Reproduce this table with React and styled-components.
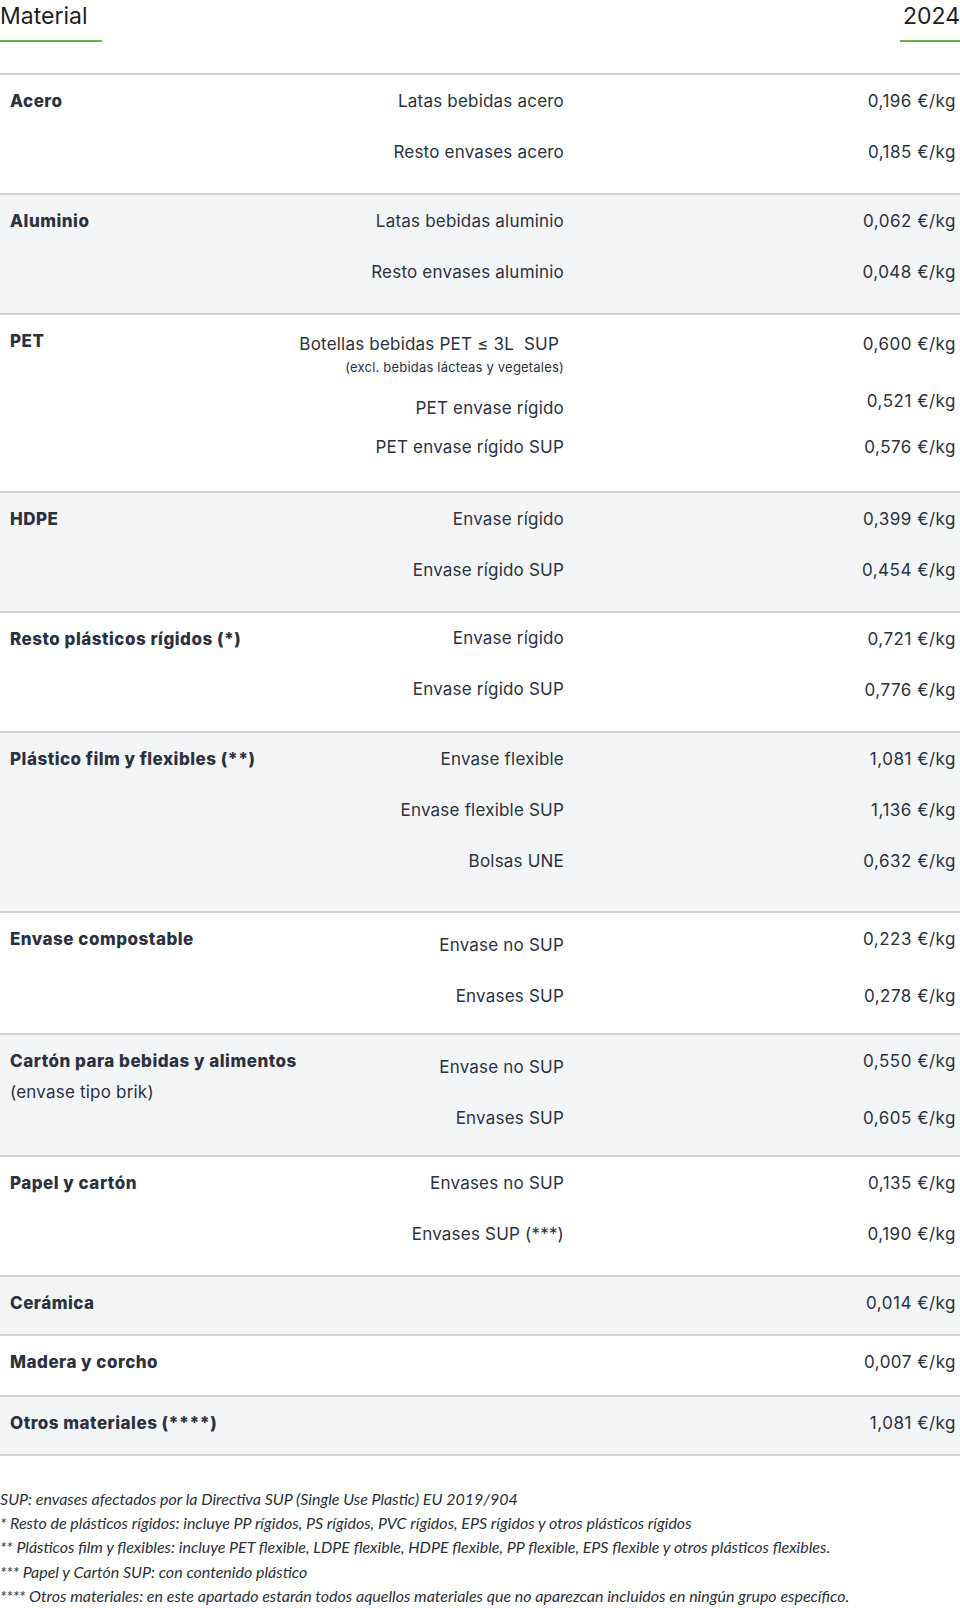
import React from "react";
import styled, { createGlobalStyle } from "styled-components";

const GlobalStyle = createGlobalStyle`
  html, body {
    margin: 0;
    padding: 0;
    background: #ffffff;
  }
  body {
    font-family: Inter, "Noto Sans", Arial, sans-serif;
    color: #2b3140;
  }
`;

const Page = styled.div`
  width: 960px;
`;

const Header = styled.div`
  display: flex;
  justify-content: space-between;
  margin-bottom: 31px;
`;

const HeadCell = styled.div`
  width: ${({ width }) => width}px;
  text-align: ${({ align }) => align || "left"};
  font-size: 23px;
  line-height: 28px;
  padding-top: 2px;
  padding-bottom: 10px;
  color: #1d1f24;
  border-bottom: 2px solid #63b545;
`;

const Table = styled.div`
  border-bottom: 2px solid #d1d2d7;
`;

const Row = styled.div`
  display: grid;
  grid-template-columns: 300px 254px 1fr;
  box-sizing: border-box;
  min-height: ${({ height }) => height}px;
  padding: 16px 4px 0 10px;
  border-top: 2px solid #d1d2d7;
  background: ${({ shaded }) => (shaded ? "#f4f5f7" : "#ffffff")};
`;

const TitleCol = styled.div`
  display: flex;
  flex-direction: column;
`;

const Title = styled.div`
  font-size: 17px;
  line-height: 20px;
  font-weight: 800;
  letter-spacing: 0.5px;
  white-space: nowrap;
`;

const SubTitle = styled.div`
  font-size: 17px;
  line-height: 20px;
  letter-spacing: 0.2px;
  margin-top: 11px;
`;

const ListCol = styled.div`
  display: flex;
  flex-direction: column;
  align-items: flex-end;
  text-align: right;
`;

const Item = styled.div`
  font-size: ${({ small }) => (small ? "13px" : "17px")};
  line-height: ${({ small }) => (small ? "16px" : "20px")};
  letter-spacing: ${({ price }) => (price ? "0.5px" : "0.2px")};
  margin-top: ${({ mt }) => mt}px;
  white-space: pre;
`;

const Notes = styled.div`
  margin-top: 31px;
  font-family: Lato, "Noto Sans", sans-serif;
  font-style: italic;
  font-size: 16px;
  line-height: 24.2px;
  color: #2b2f38;
`;

const D = [0, 31, 31];

const rows = [
  {
    title: "Acero",
    height: 120,
    items: [{ t: "Latas bebidas acero" }, { t: "Resto envases acero" }],
    prices: [{ t: "0,196 €/kg" }, { t: "0,185 €/kg" }],
  },
  {
    title: "Aluminio",
    height: 120,
    items: [{ t: "Latas bebidas aluminio" }, { t: "Resto envases aluminio" }],
    prices: [{ t: "0,062 €/kg" }, { t: "0,048 €/kg" }],
  },
  {
    title: "PET",
    height: 178,
    items: [
      { t: "Botellas bebidas PET ≤ 3L  SUP ", mt: 3 },
      { t: "(excl. bebidas lácteas y vegetales)", small: true, mt: 5 },
      { t: "PET envase rígido", mt: 23 },
      { t: "PET envase rígido SUP", mt: 19 },
    ],
    prices: [
      { t: "0,600 €/kg", mt: 3 },
      { t: "0,521 €/kg", mt: 37 },
      { t: "0,576 €/kg", mt: 26 },
    ],
  },
  {
    title: "HDPE",
    height: 120,
    items: [{ t: "Envase rígido" }, { t: "Envase rígido SUP" }],
    prices: [{ t: "0,399 €/kg" }, { t: "0,454 €/kg" }],
  },
  {
    title: "Resto plásticos rígidos (*)",
    height: 120,
    items: [{ t: "Envase rígido", mt: -1 }, { t: "Envase rígido SUP" }],
    prices: [{ t: "0,721 €/kg" }, { t: "0,776 €/kg" }],
  },
  {
    title: "Plástico film y flexibles (**)",
    height: 180,
    items: [{ t: "Envase flexible" }, { t: "Envase flexible SUP" }, { t: "Bolsas UNE" }],
    prices: [{ t: "1,081 €/kg" }, { t: "1,136 €/kg" }, { t: "0,632 €/kg" }],
  },
  {
    title: "Envase compostable",
    height: 122,
    items: [
      { t: "Envase no SUP", mt: 6 },
      { t: "Envases SUP", mt: 31 },
    ],
    prices: [
      { t: "0,223 €/kg", mt: 0 },
      { t: "0,278 €/kg", mt: 37 },
    ],
  },
  {
    title: "Cartón para bebidas y alimentos",
    sub: "(envase tipo brik)",
    height: 122,
    items: [
      { t: "Envase no SUP", mt: 6 },
      { t: "Envases SUP", mt: 31 },
    ],
    prices: [
      { t: "0,550 €/kg", mt: 0 },
      { t: "0,605 €/kg", mt: 37 },
    ],
  },
  {
    title: "Papel y cartón",
    height: 120,
    items: [{ t: "Envases no SUP" }, { t: "Envases SUP (***)" }],
    prices: [{ t: "0,135 €/kg" }, { t: "0,190 €/kg" }],
  },
  { title: "Cerámica", height: 59, items: [], prices: [{ t: "0,014 €/kg" }] },
  { title: "Madera y corcho", height: 61, items: [], prices: [{ t: "0,007 €/kg" }] },
  { title: "Otros materiales (****)", height: 59, items: [], prices: [{ t: "1,081 €/kg" }] },
];

const notes = [
  "SUP: envases afectados por la Directiva SUP (Single Use Plastic) EU 2019/904",
  "* Resto de plásticos rígidos: incluye PP rígidos, PS rígidos, PVC rígidos, EPS rígidos y otros plásticos rígidos",
  "** Plásticos film y flexibles: incluye PET flexible, LDPE flexible, HDPE flexible, PP flexible, EPS flexible y otros plásticos flexibles.",
  "*** Papel y Cartón SUP: con contenido plástico",
  "**** Otros materiales: en este apartado estarán todos aquellos materiales que no aparezcan incluidos en ningún grupo específico.",
];

function List({ entries, price }) {
  return (
    <ListCol>
      {entries.map((e, i) => (
        <Item
          key={i}
          small={e.small}
          price={price}
          mt={e.mt !== undefined ? e.mt : D[Math.min(i, 2)]}
        >
          {e.t}
        </Item>
      ))}
    </ListCol>
  );
}

export default function App() {
  return (
    <Page>
      <GlobalStyle />
      <Header>
        <HeadCell width={102}>Material</HeadCell>
        <HeadCell width={60} align="right">2024</HeadCell>
      </Header>
      <Table>
        {rows.map((r, i) => (
          <Row key={r.title} height={r.height} shaded={i % 2 === 1}>
            <TitleCol>
              <Title>{r.title}</Title>
              {r.sub && <SubTitle>{r.sub}</SubTitle>}
            </TitleCol>
            <List entries={r.items} />
            <List entries={r.prices} price />
          </Row>
        ))}
      </Table>
      <Notes>
        {notes.map((n) => (
          <div key={n}>{n}</div>
        ))}
      </Notes>
    </Page>
  );
}
